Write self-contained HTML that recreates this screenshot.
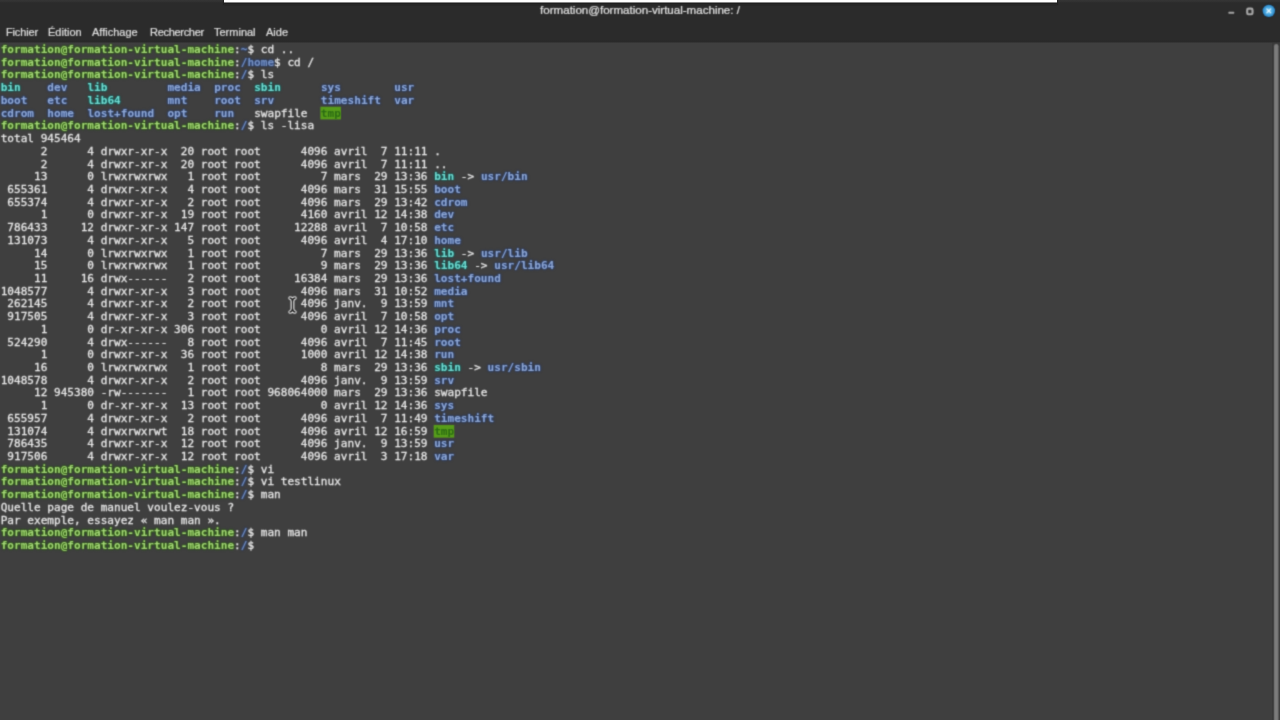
<!DOCTYPE html>
<html lang="fr"><head><meta charset="utf-8"><title>formation@formation-virtual-machine: /</title>
<style>
html,body{margin:0;padding:0;}
body{width:1280px;height:720px;overflow:hidden;background:#3f3f3f;position:relative;font-family:"Liberation Sans","DejaVu Sans",sans-serif;}
#chrome{position:absolute;left:0;top:0;width:1280px;height:44px;background:linear-gradient(to bottom,#353535 0,#323232 1.4px,#2b2b2b 2.8px,#2b2b2b 39.8px,#282828 41.4px,#3f3f3f 43.4px,#3f3f3f 44px);}
#topbar{position:absolute;left:224px;top:0;width:833px;height:5px;background:linear-gradient(to bottom,#ffffff 0,#ffffff 2px,#858585 2px,#858585 3px,#1f1f1f 3px,#1f1f1f 4px,#272727 4px,#272727 5px);box-shadow:0.6px 0 0.6px #222,-0.6px 0 0.6px #222;}
#title{position:absolute;left:0;top:2.9px;width:1280px;text-align:center;color:#e2e2e2;font-size:11.6px;line-height:14px;font-weight:normal;-webkit-text-stroke:0.22px #e2e2e2;font-family:"Liberation Sans","DejaVu Sans",sans-serif;letter-spacing:-0.02px;filter:url(#soft);}
#menu{position:absolute;left:0;top:24.6px;height:14px;width:320px;filter:url(#soft);-webkit-text-stroke:0.2px #e0e0e0;color:#e0e0e0;font-size:11px;line-height:14px;white-space:pre;}
#menu span{position:absolute;top:0;}
#term{position:absolute;left:0.65px;top:44.05px;filter:url(#soft);margin:0;font-family:"DejaVu Sans Mono","Liberation Mono",monospace;font-size:11.088px;line-height:12.725px;color:#e8e8e8;-webkit-text-stroke:0.28px #e8e8e8;white-space:pre;letter-spacing:0;}
#term b{font-weight:bold;-webkit-text-stroke:0;}
.g{color:#a5d67a;text-shadow:0 0 2px #2c6a00,0 0 1.2px #2c6a00,0 0 3px rgba(44,106,0,0.7);}
.b{color:#90a8d2;text-shadow:0 0 2px #27468a,0 0 1.2px #27468a,0 0 3px rgba(39,70,138,0.6);}
.c{color:#74dcd2;text-shadow:0 0 2px #006a66,0 0 1.2px #006a66,0 0 3px rgba(0,106,102,0.6);}
.t{color:#2a6a12;font-weight:bold;-webkit-text-stroke:0;}
#trough{position:absolute;left:1271.8px;top:43px;width:8.2px;height:677px;background:#3a3a3a;}
#scroll{position:absolute;left:1268px;top:40px;width:12px;height:680px;filter:url(#soft);}
.wbtn{position:absolute;}
#wbtns{position:absolute;left:1220px;top:0;width:60px;height:30px;filter:url(#soft);}
#ibeam{position:absolute;left:284.8px;top:292.8px;width:15px;height:24px;filter:url(#soft);}
#boxes{position:absolute;left:0;top:0;width:1280px;height:720px;filter:url(#soft);}
.p{color:#7892bf;}
</style></head>
<body>
<svg width="0" height="0" style="position:absolute"><defs><filter id="soft" x="0" y="0" width="100%" height="100%" color-interpolation-filters="sRGB"><feConvolveMatrix order="5" kernelMatrix="0.0000 0.0006 0.0023 0.0006 0.0000 0.0006 0.0306 0.1125 0.0306 0.0006 0.0023 0.1125 0.4132 0.1125 0.0023 0.0006 0.0306 0.1125 0.0306 0.0006 0.0000 0.0006 0.0023 0.0006 0.0000" edgeMode="duplicate" preserveAlpha="false"/></filter></defs></svg>
<div id="chrome">
<div id="topbar"></div>
<div id="title">formation@formation-virtual-machine: /</div>
<div id="menu"><span style="left:6px;letter-spacing:-0.15px">Fichier</span><span style="left:48px">Édition</span><span style="left:92px">Affichage</span><span style="left:150px;letter-spacing:-0.3px">Rechercher</span><span style="left:214px">Terminal</span><span style="left:266px">Aide</span></div>
<svg id="wbtns" viewBox="1220 0 60 30"><defs><radialGradient id="cg" cx="50%" cy="50%" r="50%"><stop offset="0" stop-color="#9ddcfa"/><stop offset="0.55" stop-color="#49a9e2"/><stop offset="1" stop-color="#2e86c6"/></radialGradient></defs>
<rect x="1228.5" y="11.8" width="5.6" height="1.9" rx="0.5" fill="#a6a6a6"/>
<rect x="1247.2" y="8.6" width="5.3" height="5.6" rx="1.3" fill="none" stroke="#a9a9a9" stroke-width="2.1"/>
<circle cx="1268.8" cy="10.85" r="6.9" fill="#16222e" fill-opacity="0.7"/>
<circle cx="1268.8" cy="10.85" r="6.2" fill="url(#cg)"/>
<path d="M1266.8 8.85 L1270.8 12.85 M1270.8 8.85 L1266.8 12.85" stroke="#f2faff" stroke-opacity="0.85" stroke-width="1.2" stroke-linecap="round"/></svg>
</div>
<svg id="boxes" viewBox="0 0 1280 720"><rect x="320.4" y="106.7" width="20.5" height="12.7" fill="#579d1a"/><rect x="433.7" y="424.95" width="20.5" height="12.7" fill="#579d1a"/></svg>
<pre id="term"><b class="g">formation@formation-virtual-machine</b>:<b class="b p">~</b>$ cd ..
<b class="g">formation@formation-virtual-machine</b>:<b class="b p">/home</b>$ cd /
<b class="g">formation@formation-virtual-machine</b>:<b class="b p">/</b>$ ls
<b class="c">bin</b>    <b class="b">dev</b>   <b class="c">lib</b>         <b class="b">media</b>  <b class="b">proc</b>  <b class="c">sbin</b>      <b class="b">sys</b>        <b class="b">usr</b>
<b class="b">boot</b>   <b class="b">etc</b>   <b class="c">lib64</b>       <b class="b">mnt</b>    <b class="b">root</b>  <b class="b">srv</b>       <b class="b">timeshift</b>  <b class="b">var</b>
<b class="b">cdrom</b>  <b class="b">home</b>  <b class="b">lost+found</b>  <b class="b">opt</b>    <b class="b">run</b>   swapfile  <span class="t">tmp</span>
<b class="g">formation@formation-virtual-machine</b>:<b class="b p">/</b>$ ls -lisa
total 945464
      2      4 drwxr-xr-x  20 root root      4096 avril  7 11:11 .
      2      4 drwxr-xr-x  20 root root      4096 avril  7 11:11 ..
     13      0 lrwxrwxrwx   1 root root         7 mars  29 13:36 <b class="c">bin</b> -&gt; <b class="b">usr/bin</b>
 655361      4 drwxr-xr-x   4 root root      4096 mars  31 15:55 <b class="b">boot</b>
 655374      4 drwxr-xr-x   2 root root      4096 mars  29 13:42 <b class="b">cdrom</b>
      1      0 drwxr-xr-x  19 root root      4160 avril 12 14:38 <b class="b">dev</b>
 786433     12 drwxr-xr-x 147 root root     12288 avril  7 10:58 <b class="b">etc</b>
 131073      4 drwxr-xr-x   5 root root      4096 avril  4 17:10 <b class="b">home</b>
     14      0 lrwxrwxrwx   1 root root         7 mars  29 13:36 <b class="c">lib</b> -&gt; <b class="b">usr/lib</b>
     15      0 lrwxrwxrwx   1 root root         9 mars  29 13:36 <b class="c">lib64</b> -&gt; <b class="b">usr/lib64</b>
     11     16 drwx------   2 root root     16384 mars  29 13:36 <b class="b">lost+found</b>
1048577      4 drwxr-xr-x   3 root root      4096 mars  31 10:52 <b class="b">media</b>
 262145      4 drwxr-xr-x   2 root root      4096 janv.  9 13:59 <b class="b">mnt</b>
 917505      4 drwxr-xr-x   3 root root      4096 avril  7 10:58 <b class="b">opt</b>
      1      0 dr-xr-xr-x 306 root root         0 avril 12 14:36 <b class="b">proc</b>
 524290      4 drwx------   8 root root      4096 avril  7 11:45 <b class="b">root</b>
      1      0 drwxr-xr-x  36 root root      1000 avril 12 14:38 <b class="b">run</b>
     16      0 lrwxrwxrwx   1 root root         8 mars  29 13:36 <b class="c">sbin</b> -&gt; <b class="b">usr/sbin</b>
1048578      4 drwxr-xr-x   2 root root      4096 janv.  9 13:59 <b class="b">srv</b>
     12 945380 -rw-------   1 root root 968064000 mars  29 13:36 swapfile
      1      0 dr-xr-xr-x  13 root root         0 avril 12 14:36 <b class="b">sys</b>
 655957      4 drwxr-xr-x   2 root root      4096 avril  7 11:49 <b class="b">timeshift</b>
 131074      4 drwxrwxrwt  18 root root      4096 avril 12 16:59 <span class="t">tmp</span>
 786435      4 drwxr-xr-x  12 root root      4096 janv.  9 13:59 <b class="b">usr</b>
 917506      4 drwxr-xr-x  12 root root      4096 avril  3 17:18 <b class="b">var</b>
<b class="g">formation@formation-virtual-machine</b>:<b class="b p">/</b>$ vi
<b class="g">formation@formation-virtual-machine</b>:<b class="b p">/</b>$ vi testlinux
<b class="g">formation@formation-virtual-machine</b>:<b class="b p">/</b>$ man
Quelle page de manuel voulez-vous ?
Par exemple, essayez « man man ».
<b class="g">formation@formation-virtual-machine</b>:<b class="b p">/</b>$ man man
<b class="g">formation@formation-virtual-machine</b>:<b class="b p">/</b>$ </pre>
<div id="trough"></div>
<svg id="scroll" viewBox="1268 40 12 680"><rect x="1274.05" y="44.1" width="4.4" height="700" rx="2.2" fill="#7c7c7c"/></svg>
<svg id="ibeam" viewBox="-3 -3 15 24"><path d="M0.3 1.9 Q0.3 0.3 2 0.3 Q3.4 0.3 4.5 0.9 Q5.6 0.3 7 0.3 Q8.7 0.3 8.7 1.9 Q8.7 3.3 7.3 3.8 Q6.4 4.1 6.4 5.2 L6.4 12.8 Q6.4 13.9 7.3 14.2 Q8.7 14.7 8.7 16.1 Q8.7 17.7 7 17.7 Q5.6 17.7 4.5 17.1 Q3.4 17.7 2 17.7 Q0.3 17.7 0.3 16.1 Q0.3 14.7 1.7 14.2 Q2.6 13.9 2.6 12.8 L2.6 5.2 Q2.6 4.1 1.7 3.8 Q0.3 3.3 0.3 1.9 Z" fill="#f0f0f0"/><path d="M2 2 Q4.5 2.4 4.5 5.4 L4.5 12.6 Q4.5 15.6 2 16 M7 2 Q4.5 2.4 4.5 5.4 M4.5 12.6 Q4.5 15.6 7 16" fill="none" stroke="#1c1c1c" stroke-width="1.45" stroke-linecap="round"/></svg>

</body></html>
